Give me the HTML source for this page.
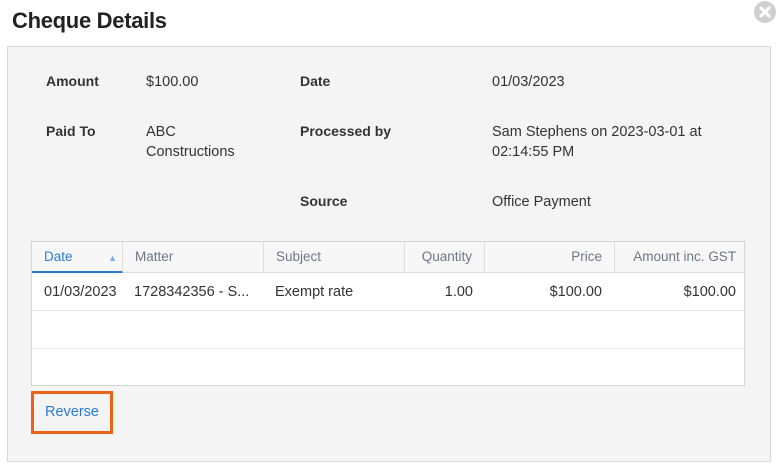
<!DOCTYPE html><html><head><style>
body{margin:0;width:782px;height:470px;background:#fff;font-family:"Liberation Sans",sans-serif;position:relative;overflow:hidden;color:#333}
.a{position:absolute;white-space:nowrap;font-size:14.5px;line-height:20px}
h1{position:absolute;left:12px;top:8px;margin:0;font-size:22px;font-weight:bold;color:#222;letter-spacing:-0.3px}
.panel{position:absolute;left:7px;top:46px;width:762px;height:414px;background:#f4f4f4;border:1px solid #d8d8d8}
.b{font-weight:bold;color:#333;font-size:14px}
.tbl{position:absolute;left:31px;top:241px;width:712px;height:143px;background:#fff;border:1px solid #d4d4d4}
.hd{position:absolute;top:0;height:30px;border-bottom:1px solid #ddd;left:0;right:0;background:#f7f7f7}
.c{position:absolute;top:0;height:30px;line-height:30px;font-size:13.5px;color:#6b7789;border-right:1px solid #ddd;box-sizing:border-box;padding:0 12px}
.r{position:absolute;left:0;right:0;border-bottom:1px solid #e6e6e6}
.d{position:absolute;font-size:14.5px;color:#333;line-height:38px;white-space:nowrap}
</style></head><body>
<h1>Cheque Details</h1>
<svg style="position:absolute;left:754px;top:1px" width="22" height="22"><circle cx="11" cy="11" r="11" fill="#cfcfcf"/><path d="M7 7L15 15M15 7L7 15" stroke="#fff" stroke-width="3.2" stroke-linecap="round"/></svg>
<div class="panel"></div>
<div class="a b" style="left:46px;top:71px">Amount</div>
<div class="a" style="left:146px;top:72px">$100.00</div>
<div class="a b" style="left:300px;top:71px">Date</div>
<div class="a" style="left:492px;top:72px">01/03/2023</div>
<div class="a b" style="left:46px;top:121px">Paid To</div>
<div class="a" style="left:146px;top:122px">ABC<br>Constructions</div>
<div class="a b" style="left:300px;top:121px">Processed by</div>
<div class="a" style="left:492px;top:122px">Sam Stephens on 2023-03-01 at<br>02:14:55 PM</div>
<div class="a b" style="left:300px;top:191px">Source</div>
<div class="a" style="left:492px;top:192px">Office Payment</div>
<div class="tbl">
<div class="hd">
<div class="c" style="left:0;width:91px;color:#2a7ad5;border-bottom:2px solid #2a7ad5;height:31px">Date<span style="position:absolute;right:5px;top:1px;font-size:9px;color:#7aaee8">▲</span></div>
<div class="c" style="left:91px;width:141px">Matter</div>
<div class="c" style="left:232px;width:141px">Subject</div>
<div class="c" style="left:373px;width:80px;text-align:right">Quantity</div>
<div class="c" style="left:453px;width:130px;text-align:right">Price</div>
<div class="c" style="left:583px;width:129px;text-align:right;border-right:none;padding-right:8px">Amount inc. GST</div>
</div>
<div class="r" style="top:30px;height:38px"></div>
<div class="r" style="top:69px;height:37px"></div>
<div class="d" style="left:12px;top:31px">01/03/2023</div>
<div class="d" style="left:102px;top:31px">1728342356 - S...</div>
<div class="d" style="left:243px;top:31px">Exempt rate</div>
<div class="d" style="right:271px;top:31px">1.00</div>
<div class="d" style="right:142px;top:31px">$100.00</div>
<div class="d" style="right:8px;top:31px">$100.00</div>
</div>
<div style="position:absolute;left:31px;top:391px;width:76px;height:37px;border:3px solid #ec6316;color:#2a7ad5;font-size:14.5px;line-height:37px;text-align:center">Reverse</div>
</body></html>
